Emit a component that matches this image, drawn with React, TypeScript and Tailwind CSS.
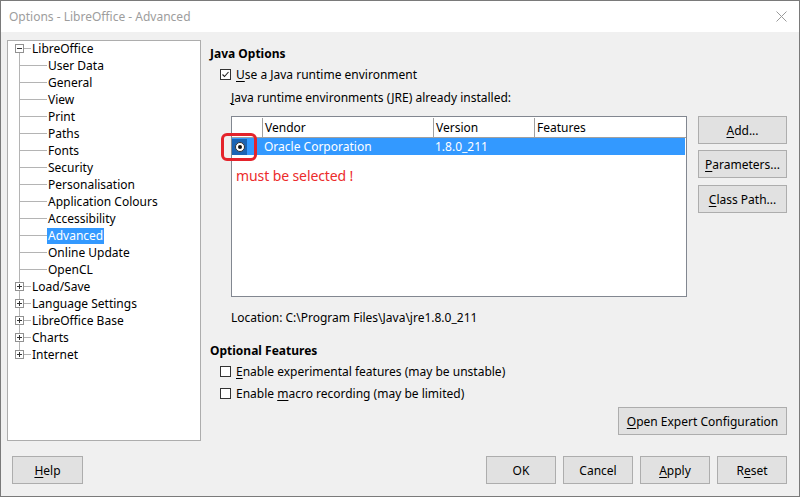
import React from "react";

type TreeItem = { label: string; level: 0 | 1; box?: "+" | "-"; selected?: boolean };

const treeItems: TreeItem[] = [
  { label: "LibreOffice", level: 0, box: "-" },
  { label: "User Data", level: 1 },
  { label: "General", level: 1 },
  { label: "View", level: 1 },
  { label: "Print", level: 1 },
  { label: "Paths", level: 1 },
  { label: "Fonts", level: 1 },
  { label: "Security", level: 1 },
  { label: "Personalisation", level: 1 },
  { label: "Application Colours", level: 1 },
  { label: "Accessibility", level: 1 },
  { label: "Advanced", level: 1, selected: true },
  { label: "Online Update", level: 1 },
  { label: "OpenCL", level: 1 },
  { label: "Load/Save", level: 0, box: "+" },
  { label: "Language Settings", level: 0, box: "+" },
  { label: "LibreOffice Base", level: 0, box: "+" },
  { label: "Charts", level: 0, box: "+" },
  { label: "Internet", level: 0, box: "+" },
];

function Gutter({ item, first, last }: { item: TreeItem; first: boolean; last: boolean }) {
  const w = item.level === 1 ? 39 : 23;
  return (
    <svg width={w} height={17} className="shrink-0 block" shapeRendering="crispEdges">
      <line x1={11.5} x2={11.5} y1={first ? 8.5 : 0} y2={last ? 8.5 : 17} stroke="#b4b4b4" strokeWidth={1} />
      {item.level === 1 ? (
        <line x1={12} x2={39} y1={8.5} y2={8.5} stroke="#b4b4b4" strokeWidth={1} />
      ) : (
        <line x1={16} x2={23} y1={8.5} y2={8.5} stroke="#b4b4b4" strokeWidth={1} />
      )}
      {item.box && (
        <g>
          <rect x={7.5} y={4.5} width={8} height={8} fill="#ffffff" stroke="#919191" strokeWidth={1} />
          <line x1={9} x2={14} y1={8.5} y2={8.5} stroke="#333333" strokeWidth={1} />
          {item.box === "+" && <line x1={11.5} x2={11.5} y1={6} y2={11} stroke="#333333" strokeWidth={1} />}
        </g>
      )}
    </svg>
  );
}

function Checkbox({ checked }: { checked?: boolean }) {
  return (
    <div className="w-[11px] h-[11px] border border-[#333333] bg-white shrink-0 flex items-center justify-center">
      {checked && (
        <svg width="9" height="9" viewBox="0 0 9 9">
          <polyline points="1.5,4.5 3.5,6.5 7.5,2" fill="none" stroke="#222222" strokeWidth="1.1" />
        </svg>
      )}
    </div>
  );
}

function Btn({ children, className }: { children: React.ReactNode; className?: string }) {
  return (
    <div
      className={
        "h-[28px] pt-px bg-[#e1e1e1] border border-[#adadad] flex items-center justify-center text-[12px] text-black " +
        (className ?? "")
      }
    >
      {children}
    </div>
  );
}

function U({ children }: { children: React.ReactNode }) {
  return <span className="underline underline-offset-[2px] decoration-[1px]">{children}</span>;
}

export default function App() {
  return (
    <div className="w-[800px] h-[497px] border border-[#7a7a7a] bg-[#f0f0f0] flex flex-col text-[12px] text-black font-['Noto_Sans',sans-serif] overflow-hidden leading-[18px]">
      {/* Title bar */}
      <div className="h-[31px] bg-white flex items-center justify-between pl-[8px] pr-[12px] shrink-0">
        <span className="text-[#9d9d9d] text-[12px]">Options - LibreOffice - Advanced</span>
        <svg width="11" height="11" viewBox="0 0 11 11">
          <line x1="0.5" y1="0.5" x2="10.5" y2="10.5" stroke="#9a9a9a" strokeWidth="1" />
          <line x1="10.5" y1="0.5" x2="0.5" y2="10.5" stroke="#9a9a9a" strokeWidth="1" />
        </svg>
      </div>

      {/* Body */}
      <div className="flex flex-col px-[6px] pt-[8px]">
        <div className="flex h-[401px]">
          {/* Tree */}
          <div className="w-[194px] h-full border border-[#adadad] bg-white shrink-0 overflow-hidden">
            <div className="-mt-px">
              {treeItems.map((item, i) => (
                <div key={item.label} className="h-[17px] flex items-center">
                  <Gutter item={item} first={i === 0} last={i === treeItems.length - 1} />
                  <span
                    className={
                      "h-[16px] leading-[16px] px-[1px] whitespace-nowrap " +
                      (item.selected ? "bg-[#3399ff] text-white" : "text-black")
                    }
                  >
                    {item.label}
                  </span>
                </div>
              ))}
            </div>
          </div>

          {/* Right content */}
          <div className="flex-1 flex flex-col pl-[9px]">
            <div className="mt-[4px] h-[18px] pt-px font-bold">Java Options</div>
            <div className="mt-[3px] h-[18px] flex items-center pl-[10px] gap-[5px]">
              <Checkbox checked />
              <span className="pt-px">
                <U>U</U>se a Java runtime environment
              </span>
            </div>
            <div className="mt-[5px] h-[18px] pt-px pl-[21px]">
              <U>J</U>ava runtime environments (JRE) already installed:
            </div>

            <div className="mt-[10px] flex pl-[21px] gap-[11px]">
              {/* Table */}
              <div className="relative w-[456px] h-[181px] border border-[#828790] bg-white">
                <div className="h-[21px] pt-px flex border-b border-[#a0a0a0]">
                  <div className="w-[31px] border-r border-[#a0a0a0]" />
                  <div className="w-[171px] border-r border-[#a0a0a0] pl-[2px] flex items-center">Vendor</div>
                  <div className="w-[101px] border-r border-[#a0a0a0] pl-[2px] flex items-center">Version</div>
                  <div className="flex-1 pl-[2px] flex items-center">Features</div>
                </div>
                <div className="h-[17px] flex bg-[#3399ff] text-white mr-px">
                  <div className="w-[31px] flex items-center">
                    <div className="w-[15px] h-[16px] bg-[#1b64b4] flex items-center justify-center">
                      <div className="w-[10px] h-[10px] rounded-full bg-white border border-[#333333] flex items-center justify-center">
                        <div className="w-[4px] h-[4px] rounded-full bg-[#111111]" />
                      </div>
                    </div>
                  </div>
                  <div className="w-[171px] pl-[1px] flex items-center">Oracle Corporation</div>
                  <div className="w-[101px] pl-[1px] flex items-center">1.8.0_211</div>
                </div>
                <div className="mt-[11px] pl-[4px] text-[14px] leading-[20px] tracking-[-0.1px] text-[#ec2b2b]">must be selected !</div>

                {/* Red annotation box */}
                <div className="absolute left-[-11px] top-[16px] w-[36px] h-[28px] border-[3px] border-[#e4232b] rounded-[6px]" />
              </div>

              {/* Side buttons */}
              <div className="w-[89px] flex flex-col">
                <Btn>
                  <U>A</U>dd...
                </Btn>
                <Btn className="mt-[6px]">
                  <U>P</U>arameters...
                </Btn>
                <Btn className="mt-[7px]">
                  <U>C</U>lass Path...
                </Btn>
              </div>
            </div>

            <div className="mt-[11px] h-[18px] pt-px pl-[21px]">Location: C:\Program Files\Java\jre1.8.0_211</div>
            <div className="mt-[15px] h-[18px] pt-px font-bold">Optional Features</div>
            <div className="mt-[3px] h-[18px] flex items-center pl-[10px] gap-[5px]">
              <Checkbox />
              <span className="pt-px">
                <U>E</U>nable experimental features (may be unstable)
              </span>
            </div>
            <div className="mt-[4px] h-[18px] flex items-center pl-[10px] gap-[5px]">
              <Checkbox />
              <span className="pt-px">
                Enable <U>m</U>acro recording (may be limited)
              </span>
            </div>
            <div className="mt-[5px] flex justify-end pr-[6px]">
              <Btn className="w-[169px]">
                <U>O</U>pen Expert Configuration
              </Btn>
            </div>
          </div>
        </div>

        {/* Bottom buttons */}
        <div className="mt-[15px] flex items-center">
          <Btn className="w-[71px] ml-[5px]">
            <U>H</U>elp
          </Btn>
          <div className="flex-1" />
          <div className="flex gap-[7px] mr-[6px]">
            <Btn className="w-[70px]">OK</Btn>
            <Btn className="w-[70px]">Cancel</Btn>
            <Btn className="w-[70px]">
              <U>A</U>pply
            </Btn>
            <Btn className="w-[70px]">
              R<U>e</U>set
            </Btn>
          </div>
        </div>
      </div>
    </div>
  );
}
